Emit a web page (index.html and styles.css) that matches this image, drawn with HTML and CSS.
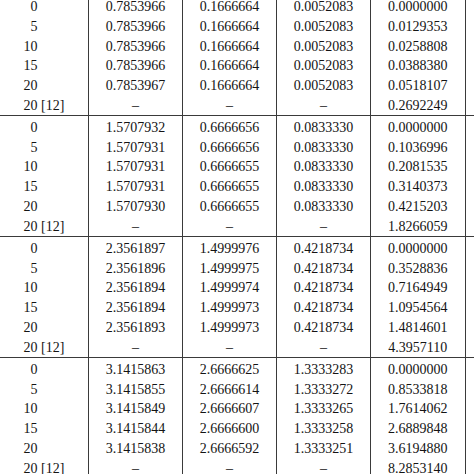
FILE: index.html
```html
<!DOCTYPE html>
<html>
<head>
<meta charset="utf-8">
<link rel="stylesheet" href="styles.css">
</head>
<body>
<div class="sheet">
  <div class="group">
    <div class="c key pad">0</div><div class="c">0.7853966</div><div class="c">0.1666664</div><div class="c">0.0052083</div><div class="c">0.0000000</div>
    <div class="c key pad">5</div><div class="c">0.7853966</div><div class="c">0.1666664</div><div class="c">0.0052083</div><div class="c">0.0129353</div>
    <div class="c key">10</div><div class="c">0.7853966</div><div class="c">0.1666664</div><div class="c">0.0052083</div><div class="c">0.0258808</div>
    <div class="c key">15</div><div class="c">0.7853966</div><div class="c">0.1666664</div><div class="c">0.0052083</div><div class="c">0.0388380</div>
    <div class="c key">20</div><div class="c">0.7853967</div><div class="c">0.1666664</div><div class="c">0.0052083</div><div class="c">0.0518107</div>
    <div class="c key">20 [12]</div><div class="c">–</div><div class="c">–</div><div class="c">–</div><div class="c">0.2692249</div>
  </div>
  <div class="group">
    <div class="c key pad">0</div><div class="c">1.5707932</div><div class="c">0.6666656</div><div class="c">0.0833330</div><div class="c">0.0000000</div>
    <div class="c key pad">5</div><div class="c">1.5707931</div><div class="c">0.6666656</div><div class="c">0.0833330</div><div class="c">0.1036996</div>
    <div class="c key">10</div><div class="c">1.5707931</div><div class="c">0.6666655</div><div class="c">0.0833330</div><div class="c">0.2081535</div>
    <div class="c key">15</div><div class="c">1.5707931</div><div class="c">0.6666655</div><div class="c">0.0833330</div><div class="c">0.3140373</div>
    <div class="c key">20</div><div class="c">1.5707930</div><div class="c">0.6666655</div><div class="c">0.0833330</div><div class="c">0.4215203</div>
    <div class="c key">20 [12]</div><div class="c">–</div><div class="c">–</div><div class="c">–</div><div class="c">1.8266059</div>
  </div>
  <div class="group">
    <div class="c key pad">0</div><div class="c">2.3561897</div><div class="c">1.4999976</div><div class="c">0.4218734</div><div class="c">0.0000000</div>
    <div class="c key pad">5</div><div class="c">2.3561896</div><div class="c">1.4999975</div><div class="c">0.4218734</div><div class="c">0.3528836</div>
    <div class="c key">10</div><div class="c">2.3561894</div><div class="c">1.4999974</div><div class="c">0.4218734</div><div class="c">0.7164949</div>
    <div class="c key">15</div><div class="c">2.3561894</div><div class="c">1.4999973</div><div class="c">0.4218734</div><div class="c">1.0954564</div>
    <div class="c key">20</div><div class="c">2.3561893</div><div class="c">1.4999973</div><div class="c">0.4218734</div><div class="c">1.4814601</div>
    <div class="c key">20 [12]</div><div class="c">–</div><div class="c">–</div><div class="c">–</div><div class="c">4.3957110</div>
  </div>
  <div class="group">
    <div class="c key pad">0</div><div class="c">3.1415863</div><div class="c">2.6666625</div><div class="c">1.3333283</div><div class="c">0.0000000</div>
    <div class="c key pad">5</div><div class="c">3.1415855</div><div class="c">2.6666614</div><div class="c">1.3333272</div><div class="c">0.8533818</div>
    <div class="c key">10</div><div class="c">3.1415849</div><div class="c">2.6666607</div><div class="c">1.3333265</div><div class="c">1.7614062</div>
    <div class="c key">15</div><div class="c">3.1415844</div><div class="c">2.6666600</div><div class="c">1.3333258</div><div class="c">2.6889848</div>
    <div class="c key">20</div><div class="c">3.1415838</div><div class="c">2.6666592</div><div class="c">1.3333251</div><div class="c">3.6194880</div>
    <div class="c key">20 [12]</div><div class="c">–</div><div class="c">–</div><div class="c">–</div><div class="c">8.2853140</div>
  </div>
</div>
</body>
</html>
```

FILE: styles.css
```css
html, body {
  margin: 0;
  padding: 0;
  background: #ffffff;
}
body {
  width: 474px;
  height: 474px;
  overflow: hidden;
  font-family: "Liberation Serif", "Times New Roman", serif;
  font-size: 14px;
  color: #141414;
}
.sheet {
  margin-top: -5px;
  display: flex;
  flex-direction: column;
}
.group {
  display: grid;
  grid-template-columns: 89px 94px 94px 94px 94.5px 1fr;
  grid-template-rows: 20.5px 19.7px 19.7px 19.7px 19.7px 20.7px;
  border-bottom: 1px solid #3a3a3a;
}
.c {
  box-sizing: border-box;
  display: flex;
  align-items: center;
  justify-content: center;
  padding-top: 3px;
  border-right: 1px solid #3a3a3a;
  line-height: 16px;
  white-space: nowrap;
}
.c:nth-child(5n+1) {
  grid-column: 1;
}
.key {
  justify-content: flex-start;
  padding-left: 23.5px;
}
.key.pad {
  padding-left: 30.5px;
}
```
